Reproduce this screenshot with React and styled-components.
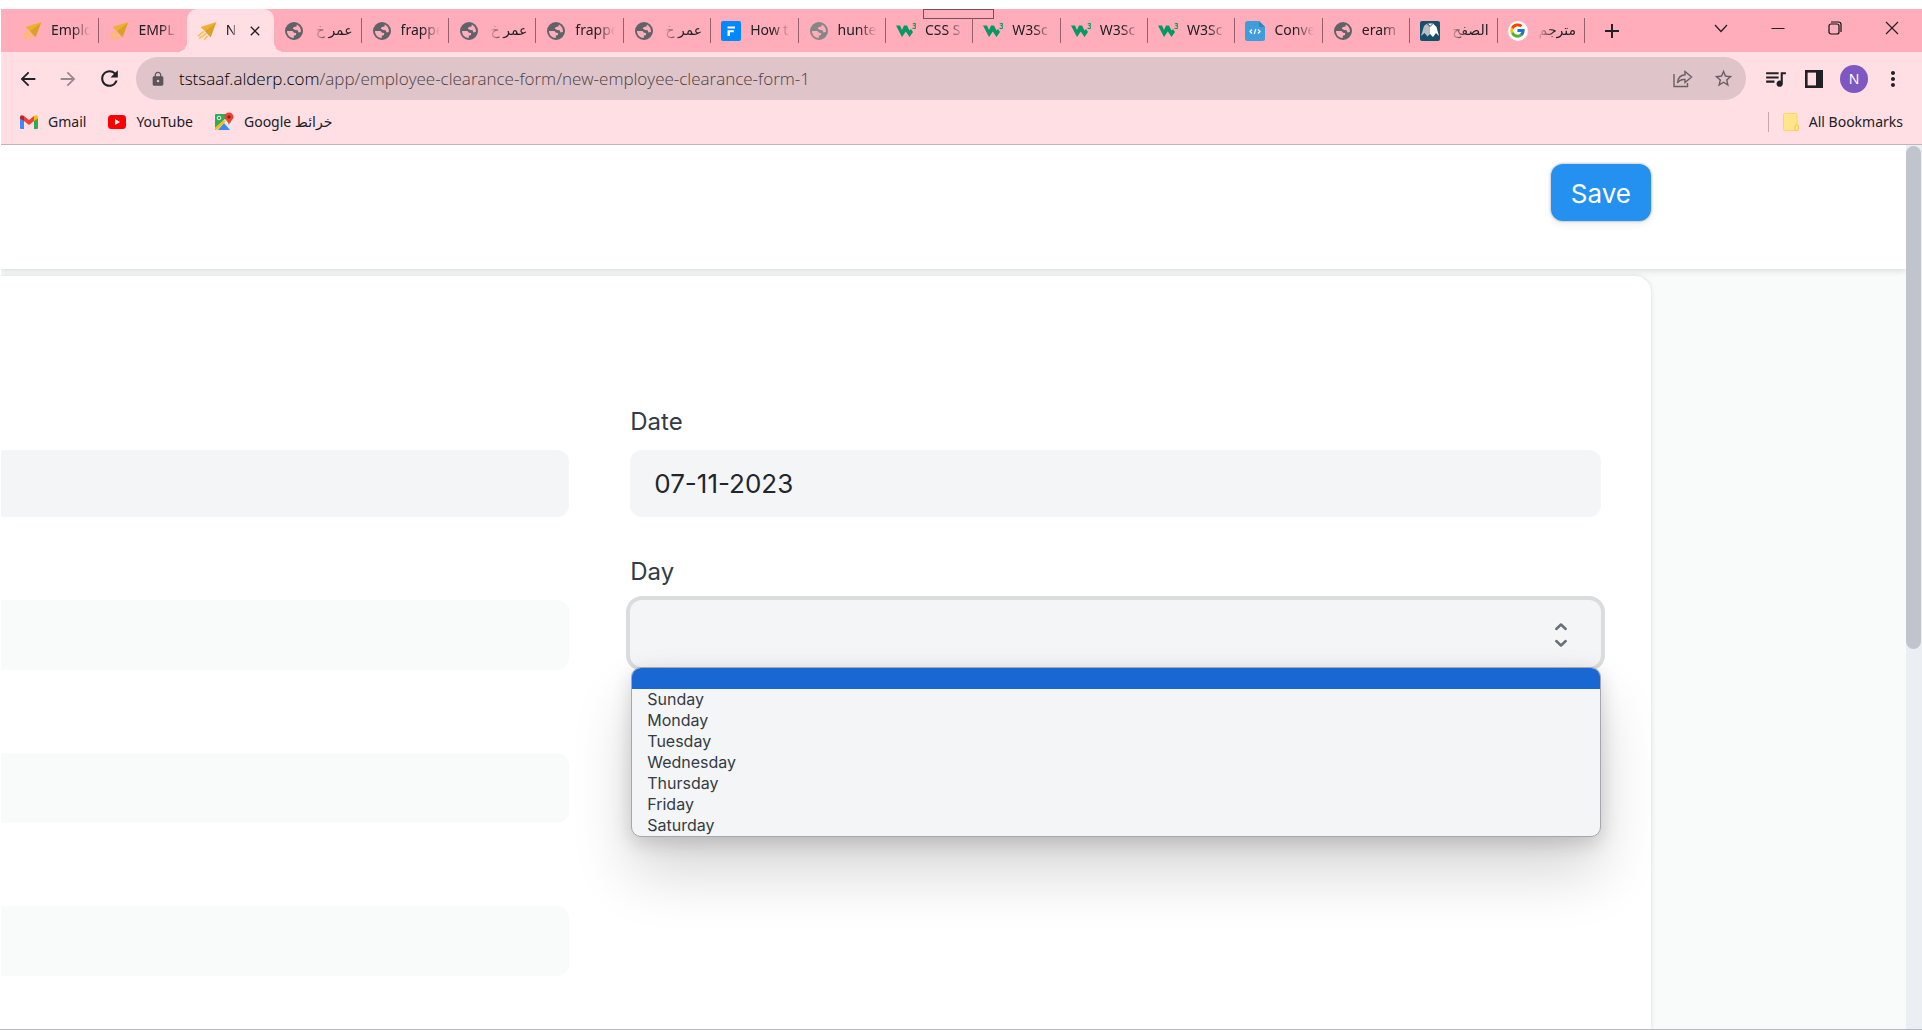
import styled, { createGlobalStyle, css } from "styled-components";
import { FcGoogle } from "react-icons/fc";
import {
  MdAdd,
  MdArrowBack,
  MdArrowForward,
  MdClose,
  MdLock,
  MdMoreVert,
  MdQueueMusic,
  MdRefresh,
  MdStarBorder,
} from "react-icons/md";

const RocketIcon = () => (
  <svg width="22" height="22" viewBox="0 0 22 22">
    <path d="M21.500 1 L4 6.500 L8 10.500 L13 16 L15 18 Z" fill="#ecb12f" />
    <path d="M20.500 2.500 L9 11 L13 16 L15 17.500 Z" fill="#d9a02b" />
    <path d="M7.500 11.500 L1 17 M5 17 L2.500 19.500 M10 13.500 L5.500 17.500 M11.500 16.500 L8 20.500" stroke="#fbc04d" strokeWidth="1.700" />
  </svg>
);

const GlobeIcon = ({ color = "#5f6368" }) => (
  <svg width="18" height="18" viewBox="0 0 18 18">
    <path
      fillRule="evenodd"
      fill={color}
      d="M9 0 A9 9 0 1 1 9 18 A9 9 0 1 1 9 0 Z
        M2 9 C2 13 5 15.800 8.800 16 L8.800 13.800 L11 13 L11.200 11 L9 10.800 L7.500 9 Z
        M11.800 2.600 L11.500 4.500 L8.800 5 L7.800 6.800 L10.200 8 L12.600 8.200 L13.500 10.500 L15.900 10 C16.300 6.800 14.500 3.900 11.800 2.600 Z"
    />
  </svg>
);

const FrappeIcon = () => (
  <svg width="20" height="20" viewBox="0 0 20 20">
    <rect width="20" height="20" rx="2" fill="#0089ff" />
    <path d="M6.500 5.500 H14 V7.500 H6.500 Z M6.500 9.200 H12.800 V11.200 H9 V15 H6.500 Z" fill="#fff" />
  </svg>
);

const W3Icon = () => (
  <svg width="20" height="20" viewBox="0 0 20 20">
    <path d="M0 4.500 H4 L6 9 L8 4.500 H11 L13.500 9.500 L15 8 L17 11 L13.500 16 L9.800 10.500 L6 16 Z" fill="#059862" />
    <text x="16" y="8" fontSize="8" fontWeight="700" fontFamily="Noto Sans, sans-serif" fill="#059862">3</text>
  </svg>
);

const CodeFileIcon = () => (
  <svg width="20" height="20" viewBox="0 0 20 20">
    <path d="M2.500 0 H14 L20 6 V17.500 Q20 20 17.500 20 H2.500 Q0 20 0 17.500 V2.500 Q0 0 2.500 0 Z" fill="#3f9ddb" />
    <path d="M14 0 L20 6 H15.500 Q14 6 14 4.500 Z" fill="#3282bd" />
    <path d="M7 8.500 L5 10.500 L7 12.500 M13 8.500 L15 10.500 L13 12.500 M10.800 8 L9.200 13" stroke="#fff" strokeWidth="1.200" fill="none" />
  </svg>
);

const PeaksIcon = () => (
  <svg width="20" height="20" viewBox="0 0 20 20">
    <rect width="20" height="20" rx="2" fill="#154f6b" />
    <path d="M1 15 L4 5 L7 2.500 L10 5 V13 L7.500 15.500 L4.500 12 Z" fill="#b9bdc2" />
    <path d="M8 2.500 H13 L16.500 6 L19 15 L16 12 L13 16 L10 13 V5 Z" fill="#fff" />
    <path d="M7 2.500 L10 5.500 L13 2.500" stroke="#154f6b" fill="none" />
  </svg>
);

const GoogleIcon = () => (
  <RoundBadge>
    <FcGoogle size={17} />
  </RoundBadge>
);

const GmailIcon = () => (
  <svg width="18" height="14" viewBox="0 0 18 14">
    <path d="M0 2 V13 Q0 14 1 14 H4 V5 Z" fill="#4285f4" />
    <path d="M18 2 V13 Q18 14 17 14 H14 V5 Z" fill="#34a853" />
    <path d="M14 1 V6 L18 3.500 V2 Q17.500 -0.800 14 1 Z" fill="#fbbc04" />
    <path d="M4 1 V6 L0 3.500 V2 Q0.500 -0.800 4 1 Z" fill="#c5221f" />
    <path d="M4 1 L9 5 L14 1 V6 L9 10 L4 6 Z" fill="#ea4335" />
  </svg>
);

const YouTubeIcon = () => (
  <svg width="18" height="14" viewBox="0 0 18 14">
    <rect width="18" height="14" rx="3.500" fill="#f00" />
    <path d="M7 4 L12 7 L7 10 Z" fill="#fff" />
  </svg>
);

const MapsIcon = () => (
  <svg width="19" height="19" viewBox="0 0 19 19">
    <rect y="2" width="16" height="16" rx="1" fill="#34a853" />
    <path d="M0 16 L11 6 L16 11 V18 H1 Z" fill="#e8eaed" />
    <path d="M3 18 L9 11 L15 18 Z" fill="#4285f4" />
    <path d="M0 16 L9 8 L10.500 9.500 L2 18 Z" fill="#fbbc04" />
    <circle cx="4" cy="6" r="1.800" fill="none" stroke="#e6f4ea" strokeWidth="1" />
    <path d="M9.500 5 A4.500 4.500 0 0 1 18.500 5 C18.500 8 14.500 9 14 13.500 C13.500 9 9.500 8 9.500 5 Z" fill="#ea4335" />
    <circle cx="14" cy="5" r="1.600" fill="#8c1a11" />
  </svg>
);

const ShareIcon = () => (
  <svg width="20" height="18" viewBox="0 0 20 18" fill="none" stroke="#6b5f63" strokeWidth="1.400">
    <path d="M1 4 V16.500 H14.500 V13" />
    <path d="M12 1.500 L18.500 7 L12 12.500 V9.500 Q7 9 4.500 13 Q5 5.500 12 4.800 Z" />
  </svg>
);

const SidePanelIcon = () => (
  <svg width="18" height="18" viewBox="0 0 18 18">
    <rect x="1.300" y="1.300" width="15.400" height="15.400" fill="none" stroke="#202124" strokeWidth="2.600" />
    <rect x="11" y="1" width="6" height="16" fill="#202124" />
  </svg>
);

const FolderIcon = () => (
  <svg width="16" height="18" viewBox="0 0 16 18">
    <rect x="0.500" y="0.500" width="13.500" height="17" rx="1" fill="#ffe68c" stroke="#fbd75b" />
    <rect x="12" y="12" width="3.500" height="5.500" rx="1" fill="#ffe68c" stroke="#f5c84a" />
  </svg>
);

const ChevronDown = () => (
  <svg width="14" height="14" viewBox="0 0 14 14" fill="none" stroke="#202124" strokeWidth="1.200">
    <path d="M1 4 L7 10.500 L13 4" />
  </svg>
);

const MinimizeIcon = () => (
  <svg width="14" height="14" viewBox="0 0 14 14">
    <path d="M0.500 7.500 H13.500" stroke="#202124" />
  </svg>
);

const RestoreIcon = () => (
  <svg width="14" height="14" viewBox="0 0 14 14" fill="none" stroke="#111" strokeWidth="1.200">
    <rect x="1" y="3" width="10" height="10" rx="2" />
    <path d="M3 1 H10.500 Q13 1 13 3.500 V11" />
  </svg>
);

const CloseWindowIcon = () => (
  <svg width="14" height="14" viewBox="0 0 14 14" stroke="#202124" strokeWidth="1.200">
    <path d="M1 1 L13 13 M13 1 L1 13" />
  </svg>
);

const SelectArrows = () => (
  <svg width="14" height="26" viewBox="0 0 14 26" fill="none" stroke="#687178" strokeWidth="2.500" strokeLinecap="round" strokeLinejoin="round">
    <path d="M2.300 7 L7 2.500 L11.700 7 M2.300 19 L7 23.500 L11.700 19" />
  </svg>
);

const tabs = [
  { title: "Emplo", icon: <RocketIcon /> },
  { title: "EMPL", icon: <RocketIcon /> },
  { title: "N", icon: <RocketIcon />, active: true },
  { title: "عمر خ", icon: <GlobeIcon />, rtl: true },
  { title: "frappe", icon: <GlobeIcon /> },
  { title: "عمر خ", icon: <GlobeIcon />, rtl: true },
  { title: "frappe", icon: <GlobeIcon /> },
  { title: "عمر خ", icon: <GlobeIcon />, rtl: true },
  { title: "How t", icon: <FrappeIcon /> },
  { title: "hunte", icon: <GlobeIcon color="#868686" /> },
  { title: "CSS S", icon: <W3Icon /> },
  { title: "W3Sc", icon: <W3Icon /> },
  { title: "W3Sc", icon: <W3Icon /> },
  { title: "W3Sc", icon: <W3Icon /> },
  { title: "Conve", icon: <CodeFileIcon /> },
  { title: "eram", icon: <GlobeIcon /> },
  { title: "الصفح", icon: <PeaksIcon />, rtl: true },
  { title: "مترجم", icon: <GoogleIcon />, rtl: true },
];

const days = ["", "Sunday", "Monday", "Tuesday", "Wednesday", "Thursday", "Friday", "Saturday"];

const App = () => {
  return (
    <>
      <GlobalStyle />
      <Window>
        <TabStrip>
          <DragHandle />
          <Tabs>
            {tabs.map((tab, index) => (
              <Tab
                key={index}
                $active={tab.active}
                $divider={!tab.active && !(tabs[index + 1] && tabs[index + 1].active)}
              >
                <TabIcon>{tab.icon}</TabIcon>
                <TabTitle $rtl={tab.rtl} dir={tab.rtl ? "rtl" : "ltr"}>{tab.title}</TabTitle>
                {tab.active && (
                  <TabClose aria-label="Close tab">
                    <MdClose size={16} />
                  </TabClose>
                )}
              </Tab>
            ))}
          </Tabs>
          <WindowControls>
            <IconButton aria-label="New tab"><MdAdd size={24} /></IconButton>
            <WindowButtons>
              <IconButton aria-label="Search tabs"><ChevronDown /></IconButton>
              <IconButton aria-label="Minimize"><MinimizeIcon /></IconButton>
              <IconButton aria-label="Restore"><RestoreIcon /></IconButton>
              <IconButton aria-label="Close"><CloseWindowIcon /></IconButton>
            </WindowButtons>
          </WindowControls>
        </TabStrip>

        <Toolbar>
          <NavButtons>
            <IconButton aria-label="Back"><MdArrowBack size={22} /></IconButton>
            <IconButton aria-label="Forward" $faded><MdArrowForward size={22} /></IconButton>
            <IconButton aria-label="Reload"><MdRefresh size={25} /></IconButton>
          </NavButtons>
          <AddressBar>
            <MdLock size={16} color="#5a5558" />
            <Url href="#form">
              <b>tstsaaf.alderp.com</b>/app/employee-clearance-form/new-employee-clearance-form-1
            </Url>
            <AddressActions>
              <IconButton aria-label="Share"><ShareIcon /></IconButton>
              <IconButton aria-label="Bookmark this page"><MdStarBorder size={21} color="#6b5f63" /></IconButton>
            </AddressActions>
          </AddressBar>
          <ToolbarActions>
            <IconButton aria-label="Media"><MdQueueMusic size={25} /></IconButton>
            <IconButton aria-label="Side panel"><SidePanelIcon /></IconButton>
            <Avatar aria-label="Profile">N</Avatar>
            <MenuButton aria-label="Menu"><MdMoreVert size={24} /></MenuButton>
          </ToolbarActions>
        </Toolbar>

        <BookmarksBar>
          <Bookmark href="#gmail"><GmailIcon />Gmail</Bookmark>
          <Bookmark href="#youtube"><YouTubeIcon />YouTube</Bookmark>
          <Bookmark href="#maps"><MapsIcon /><bdi dir="ltr">Google خرائط</bdi></Bookmark>
          <AllBookmarks>
            <Bookmark href="#all"><FolderIcon />All Bookmarks</Bookmark>
          </AllBookmarks>
        </BookmarksBar>

        <Viewport>
          <Page>
            <PageHead>
              <SaveButton>Save</SaveButton>
            </PageHead>
            <FormCard id="form">
              <Column>
                <Field $unlabelled><Input aria-label="Employee" /></Field>
                <Field $unlabelled><Input aria-label="Employee name" $readOnly readOnly /></Field>
                <Field $unlabelled><Input aria-label="Department" $readOnly readOnly /></Field>
                <Field $unlabelled><Input aria-label="Designation" $readOnly readOnly /></Field>
              </Column>
              <Column>
                <Field>
                  <Label htmlFor="date">Date</Label>
                  <Input id="date" defaultValue="07-11-2023" />
                </Field>
                <Field>
                  <Label htmlFor="day">Day</Label>
                  <SelectWrap>
                    <Select id="day" defaultValue="">
                      {days.map((day) => (
                        <option key={day} value={day}>{day}</option>
                      ))}
                    </Select>
                    <ArrowSlot><SelectArrows /></ArrowSlot>
                    <Options role="listbox" aria-label="Day">
                      {days.map((day) => (
                        <Option key={day} role="option" aria-selected={day === ""} $selected={day === ""}>
                          {day}
                        </Option>
                      ))}
                    </Options>
                  </SelectWrap>
                </Field>
              </Column>
            </FormCard>
          </Page>
          <Scrollbar>
            <Thumb />
          </Scrollbar>
        </Viewport>
      </Window>
    </>
  );
};

const GlobalStyle = createGlobalStyle`
  * {
    box-sizing: border-box;
  }
  body {
    margin: 0;
    background: #fff;
    font-family: "Noto Sans", "DejaVu Sans", sans-serif;
    color: #202124;
  }
  button, input, select {
    font: inherit;
    color: inherit;
  }
`;

const Window = styled.div`
  display: flex;
  flex-direction: column;
  height: 100vh;
  padding: 9px 0 0 1px;
  border-bottom: 1px solid #b4b9c2;
  overflow: hidden;
`;

const TabStrip = styled.div`
  position: relative;
  display: flex;
  flex: none;
  height: 43px;
  padding-left: 11px;
  background: #ffacbb;
`;

const DragHandle = styled.span`
  position: absolute;
  top: 0;
  left: 48%;
  width: 71px;
  height: 10px;
  border: 1px solid #75525a;
`;

const Tabs = styled.div`
  display: flex;
  flex: 1;
  min-width: 0;
`;

const Tab = styled.div`
  position: relative;
  display: flex;
  align-items: center;
  flex: 1 1 0;
  min-width: 0;
  padding: 0 9px 0 10px;
  ${({ $active }) =>
    $active &&
    css`
      background: #ffdee4;
      border-radius: 10px 10px 0 0;
      &::before,
      &::after {
        content: "";
        position: absolute;
        bottom: 0;
        width: 10px;
        height: 10px;
      }
      &::before {
        right: 100%;
        background: radial-gradient(circle at 0 0, transparent 10px, #ffdee4 10px);
      }
      &::after {
        left: 100%;
        background: radial-gradient(circle at 100% 0, transparent 10px, #ffdee4 10px);
      }
    `}
  ${({ $divider }) =>
    $divider &&
    css`
      &::after {
        content: "";
        position: absolute;
        right: 0;
        top: 9px;
        width: 1px;
        height: 25px;
        background: #95606b;
      }
    `}
`;

const TabIcon = styled.span`
  display: flex;
  justify-content: center;
  flex: none;
  width: 20px;
  margin-right: 9px;
`;

const TabTitle = styled.span`
  flex: 1;
  min-width: 0;
  overflow: hidden;
  white-space: nowrap;
  font-size: 14px;
  line-height: 24px;
  padding-bottom: 1px;
  mask-image: linear-gradient(to ${({ $rtl }) => ($rtl ? "left" : "right")}, #000 55%, transparent);
`;

const IconButton = styled.button`
  display: flex;
  align-items: center;
  justify-content: center;
  padding: 0;
  border: 0;
  background: none;
  opacity: ${({ $faded }) => ($faded ? 0.45 : 1)};
`;

const TabClose = styled(IconButton)`
  margin: 0 2px 0 10px;
`;

const MenuButton = styled(IconButton)`
  width: 16px;
  svg {
    flex: none;
  }
`;

const WindowControls = styled.div`
  display: flex;
  justify-content: space-between;
  flex: none;
  width: 337px;
  padding: 0 23px 0 15px;
`;

const WindowButtons = styled.div`
  display: flex;
  gap: 43px;
  padding-bottom: 6px;
`;

const Toolbar = styled.div`
  display: flex;
  align-items: center;
  flex: none;
  height: 53px;
  padding: 0 21px 0 16px;
  background: #ffdee4;
`;

const NavButtons = styled.div`
  display: flex;
  gap: 18px;
  width: 119px;
`;

const AddressBar = styled.div`
  display: flex;
  align-items: center;
  flex: 1;
  min-width: 0;
  height: 43px;
  padding: 0 12px 0 14px;
  border-radius: 22px;
  background: #dfc4c9;
`;

const Url = styled.a`
  flex: 1;
  min-width: 0;
  margin-left: 13px;
  overflow: hidden;
  white-space: nowrap;
  font-family: "Open Sans", sans-serif;
  font-size: 17px;
  font-weight: 300;
  color: #4a4043;
  text-decoration: none;
  b {
    font-weight: inherit;
    color: #000;
  }
`;

const AddressActions = styled.div`
  display: flex;
  gap: 20px;
`;

const ToolbarActions = styled.div`
  display: flex;
  align-items: center;
  gap: 17px;
  margin-left: 17px;
`;

const Avatar = styled.button`
  width: 28px;
  height: 28px;
  padding: 0;
  border: 0;
  border-radius: 50%;
  background: #7e57c2;
  color: #fff;
  font-size: 14px;
`;

const BookmarksBar = styled.nav`
  display: flex;
  align-items: center;
  gap: 22px;
  flex: none;
  height: 40px;
  padding: 0 19px 6px;
  background: #ffdee4;
  border-bottom: 1px solid #cbb0b8;
`;

const Bookmark = styled.a`
  display: flex;
  align-items: center;
  gap: 10px;
  font-size: 14px;
  line-height: 20px;
  color: #202124;
  text-decoration: none;
`;

const AllBookmarks = styled.div`
  margin-left: auto;
  padding-left: 14px;
  border-left: 1px solid #c9a5ac;
`;

const RoundBadge = styled.span`
  display: flex;
  align-items: center;
  justify-content: center;
  width: 20px;
  height: 20px;
  border-radius: 50%;
  background: #fff;
`;

const Viewport = styled.div`
  display: flex;
  flex: 1;
  min-height: 0;
`;

const Page = styled.main`
  display: flex;
  flex-direction: column;
  flex: 1;
  min-width: 0;
  overflow: hidden;
  background: #f9fafa;
  font-family: Inter, sans-serif;
`;

const PageHead = styled.header`
  display: flex;
  align-items: flex-start;
  justify-content: flex-end;
  flex: none;
  height: 124px;
  padding: 19px 255px 0 0;
  background: #fff;
  box-shadow: 0 2px 6px rgba(0, 0, 0, 0.12);
`;

const SaveButton = styled.button`
  height: 57px;
  padding: 2px 20px 0;
  border: 0;
  border-radius: 12px;
  background: #2490ef;
  color: #fff;
  font-size: 26px;
  font-weight: 400;
  box-shadow: 0 0 2px 1px rgba(0, 0, 0, 0.18), 0 4px 8px rgba(0, 0, 0, 0.06);
`;

const FormCard = styled.form`
  display: grid;
  grid-template-columns: 24fr 41fr;
  gap: 61px;
  flex: 1;
  margin: 7px 255px 0 0;
  padding: 128px 50px 0 0;
  border-radius: 0 16px 0 0;
  background: #fff;
  box-shadow: 0 0 5px rgba(0, 0, 0, 0.12);
`;

const Column = styled.div`
  display: flex;
  flex-direction: column;
  gap: 37px;
`;

const Field = styled.div`
  padding-top: ${({ $unlabelled }) => ($unlabelled ? 46 : 0)}px;
`;

const Label = styled.label`
  display: block;
  margin-bottom: 10px;
  font-size: 24px;
  line-height: 36px;
  color: #333c44;
`;

const Input = styled.input`
  display: block;
  width: 100%;
  height: ${({ $readOnly }) => ($readOnly ? 70 : 67)}px;
  padding: 0 24px;
  border: 0;
  border-radius: 12px;
  background: ${({ $readOnly }) => ($readOnly ? "#f9fafa" : "#f4f5f6")};
  color: #1f272e;
  font-size: 26px;
  ${Column}:first-child & {
    border-radius: 0 12px 12px 0;
  }
`;

const SelectWrap = styled.div`
  position: relative;
`;

const Select = styled.select`
  display: block;
  width: 100%;
  height: 67px;
  padding: 0 24px;
  appearance: none;
  border: 0;
  border-radius: 12px;
  outline: 0;
  background: #f4f5f6;
  box-shadow: 0 0 0 4px #dadcdd;
  font-size: 26px;
`;

const ArrowSlot = styled.span`
  position: absolute;
  top: 22px;
  right: 33px;
  display: flex;
  pointer-events: none;
`;

const Options = styled.ul`
  position: absolute;
  top: 100%;
  left: 1px;
  right: 0;
  margin: 0;
  padding: 0;
  list-style: none;
  overflow: hidden;
  border: 1px solid #a4a7ab;
  border-radius: 10px;
  background: #f4f5f6;
  box-shadow: 0 36px 60px rgba(0, 0, 0, 0.16), 0 6px 20px rgba(0, 0, 0, 0.16);
`;

const Option = styled.li`
  height: 21px;
  padding: 0 15px;
  background: ${({ $selected }) => ($selected ? "#1967d2" : "transparent")};
  color: #333c44;
  font-size: 16px;
  line-height: 20px;
`;

const Scrollbar = styled.div`
  flex: none;
  width: 16px;
  padding: 1px 1px 0 0;
  background: #ebeef2;
`;

const Thumb = styled.div`
  height: 57%;
  border-radius: 8px;
  background: #c0c4cc;
`;

export default App;
